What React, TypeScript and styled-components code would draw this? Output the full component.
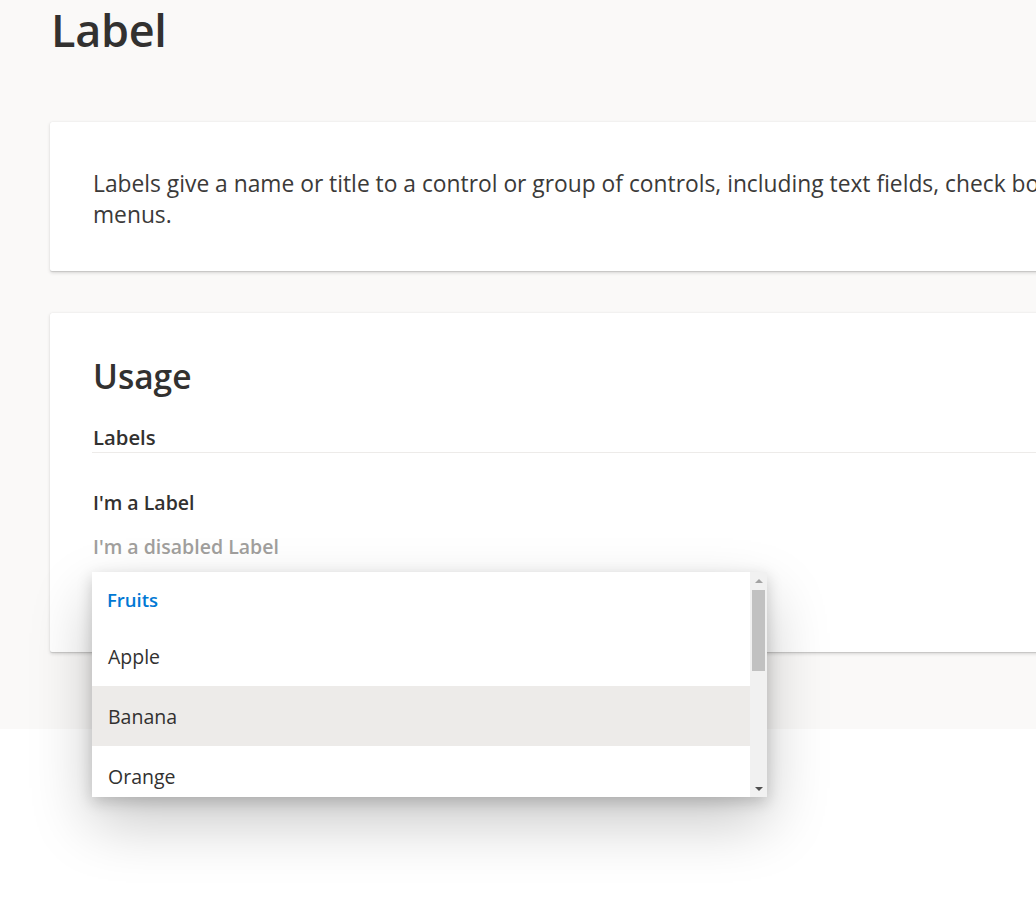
import React from 'react';
import styled, { createGlobalStyle } from 'styled-components';

const GlobalStyle = createGlobalStyle`
  html, body {
    margin: 0;
    padding: 0;
    background: #ffffff;
    overflow: hidden;
  }
  body {
    font-family: 'Open Sans', 'Noto Sans', sans-serif;
    color: #323130;
    -webkit-font-smoothing: antialiased;
  }
`;

const Page = styled.div`
  position: relative;
  width: 1036px;
  height: 921px;
  overflow: hidden;
`;

const Content = styled.main`
  background: #faf9f8;
  height: 729px;
  padding: 0 0 0 50px;
  box-sizing: border-box;
  display: flex;
  flex-direction: column;
`;

const PageTitle = styled.h1`
  margin: -2px 0 0 1px;
  font-size: 45px;
  line-height: 64px;
  font-weight: 600;
  color: #323130;
  letter-spacing: -0.3px;
`;

const Card = styled.section<{ $top: number; $height: number }>`
  width: 1200px;
  height: ${(p) => p.$height}px;
  margin-top: ${(p) => p.$top}px;
  box-sizing: border-box;
  background: #ffffff;
  border-radius: 2px;
  box-shadow: 0 1.6px 3.6px 0 rgba(0, 0, 0, 0.132), 0 0.3px 0.9px 0 rgba(0, 0, 0, 0.108);
  padding: 0 0 0 43px;
`;

const Description = styled.p`
  margin: 46px 0 0;
  font-size: 22.8px;
  line-height: 31px;
  font-weight: 400;
  color: #3b3a39;
`;

const Line = styled.span`
  display: block;
  white-space: nowrap;
`;

const SectionTitle = styled.h2`
  margin: 41px 0 0;
  font-size: 33.5px;
  line-height: 44px;
  font-weight: 600;
  color: #323130;
`;

const SubTitle = styled.h3`
  margin: 25px 0 0 -1px;
  padding: 0 0 1px 1px;
  font-size: 20.3px;
  line-height: 28px;
  font-weight: 600;
  border-bottom: 1px solid #edebe9;
  width: 1120px;
`;

const Examples = styled.div`
  display: flex;
  flex-direction: column;
  gap: 16px;
  margin-top: 36px;
`;

const LabelText = styled.label<{ $disabled?: boolean }>`
  display: block;
  font-size: 19.5px;
  line-height: 28px;
  font-weight: 600;
  color: ${(p) => (p.$disabled ? '#a19f9d' : '#323130')};
`;

/* dropdown callout, lies over the card */
const Callout = styled.div`
  position: absolute;
  left: 92px;
  top: 572px;
  width: 675px;
  height: 225px;
  background: #ffffff;
  display: flex;
  box-shadow: 0 25.6px 57.6px 0 rgba(0, 0, 0, 0.22), 0 4.8px 14.4px 0 rgba(0, 0, 0, 0.18);
  overflow: hidden;
`;

const List = styled.div`
  flex: 1;
  display: flex;
  flex-direction: column;
  overflow: hidden;
`;

const GroupHeader = styled.div`
  flex-shrink: 0;
  height: 54px;
  display: flex;
  align-items: center;
  padding-left: 15px;
  font-size: 18.5px;
  font-weight: 600;
  color: #0078d4;
`;

const Option = styled.div<{ $active?: boolean }>`
  flex-shrink: 0;
  height: 60px;
  display: flex;
  align-items: center;
  padding-left: 16px;
  font-size: 19.5px;
  font-weight: 400;
  color: #323130;
  background: ${(p) => (p.$active ? '#edebe9' : '#ffffff')};
`;

const ScrollTrack = styled.div`
  width: 17px;
  flex-shrink: 0;
  background: #f1f1f1;
  display: flex;
  flex-direction: column;
  align-items: center;
`;

const Arrow = styled.div<{ $down?: boolean }>`
  height: 17px;
  width: 17px;
  display: flex;
  align-items: center;
  justify-content: center;
  &::before {
    content: '';
    border-left: 4px solid transparent;
    border-right: 4px solid transparent;
    ${(p) =>
      p.$down
        ? 'border-top: 4px solid #505050;'
        : 'border-bottom: 4px solid #a3a3a3;'}
  }
`;

const Thumb = styled.div`
  width: 13px;
  height: 81px;
  background: #c1c1c1;
  margin-top: 1px;
`;

const Spacer = styled.div`
  flex: 1;
`;

const fruits = ['Apple', 'Banana', 'Orange', 'Grape'];

export default function App() {
  return (
    <Page>
      <GlobalStyle />
      <Content>
        <PageTitle>Label</PageTitle>
        <Card $top={60} $height={149}>
          <Description>
            <Line>
              Labels give a name or title to a control or group of controls, including text fields, check boxes,
              combo boxes, radio buttons, and drop-down
            </Line>
            <Line>menus.</Line>
          </Description>
        </Card>
        <Card $top={42} $height={339}>
          <SectionTitle>Usage</SectionTitle>
          <SubTitle>Labels</SubTitle>
          <Examples>
            <LabelText>I'm a Label</LabelText>
            <LabelText $disabled>I'm a disabled Label</LabelText>
          </Examples>
        </Card>
      </Content>
      <Callout>
        <List>
          <GroupHeader>Fruits</GroupHeader>
          {fruits.map((f) => (
            <Option key={f} $active={f === 'Banana'}>
              {f}
            </Option>
          ))}
        </List>
        <ScrollTrack>
          <Arrow />
          <Thumb />
          <Spacer />
          <Arrow $down />
        </ScrollTrack>
      </Callout>
    </Page>
  );
}
